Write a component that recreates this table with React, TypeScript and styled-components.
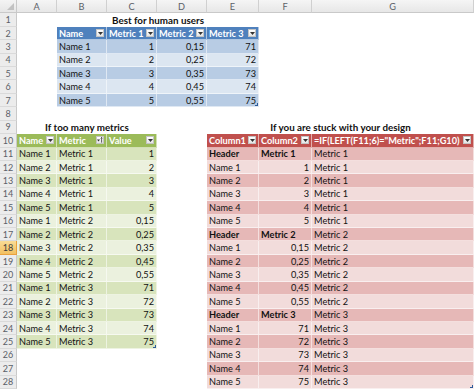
import React from "react";
import styled, { createGlobalStyle } from "styled-components";

const GlobalStyle = createGlobalStyle`
  html, body { margin: 0; padding: 0; background: #ffffff; }
  body { font-family: Lato, "Liberation Sans", sans-serif; }
  * { box-sizing: border-box; }
`;

type Theme = "blue" | "green" | "red";
type Role = "head" | "band1" | "band2";

const palette: Record<Theme, Record<Role, string>> = {
  blue: { head: "#4f81bd", band1: "#b8cce4", band2: "#dce6f1" },
  green: { head: "#9bbb59", band1: "#d8e4bc", band2: "#ebf1de" },
  red: { head: "#c0504d", band1: "#e6b8b7", band2: "#f2dcdb" },
};

type CellSpec = {
  text?: React.ReactNode;
  span?: number;
  theme?: Theme;
  role?: Role;
  align?: "left" | "right" | "center";
  bold?: boolean;
  title?: boolean;
  drop?: "filter" | "sort";
  handle?: boolean;
};

const Sheet = styled.div`
  display: grid;
  grid-template-columns: 17px 40px 50px 50px 50px 52px 53px 162px;
  grid-template-rows: repeat(29, 1fr);
  width: 474px;
  height: 389px;
  overflow: hidden;
  font-family: Lato, "Liberation Sans", sans-serif;
  font-size: 9.2px;
  color: #000;
`;

const Corner = styled.div`
  background: linear-gradient(#f4f4f4, #e6e6e6);
  border-right: 1px solid #c9c9c9;
  border-bottom: 1px solid #c9c9c9;
  display: flex;
  align-items: flex-end;
  justify-content: flex-end;
  padding: 0 2px 2px 0;
`;

const ColHeader = styled.div`
  display: flex;
  align-items: center;
  justify-content: center;
  background: linear-gradient(#f5f5f5, #e7e7e7);
  border-right: 1px solid #d0d0d0;
  border-bottom: 1px solid #c9c9c9;
  color: #5b6068;
  font-size: 9.2px;
`;

const RowHeader = styled.div<{ $selected?: boolean }>`
  display: flex;
  align-items: center;
  justify-content: center;
  background: ${(p) =>
    p.$selected ? "linear-gradient(#f9dc96, #f2c062)" : "#ececec"};
  border-right: 1px solid ${(p) => (p.$selected ? "#e9a23e" : "#c9c9c9")};
  border-bottom: 1px solid ${(p) => (p.$selected ? "#e9a23e" : "#dadada")};
  color: ${(p) => (p.$selected ? "#3d3d3d" : "#5b6068")};
  font-size: 9px;
`;

const Cell = styled.div<{
  $bg?: string;
  $align?: "left" | "right" | "center";
  $bold?: boolean;
  $light?: boolean;
  $span: number;
}>`
  position: relative;
  grid-column: span ${(p) => p.$span};
  display: flex;
  align-items: center;
  justify-content: ${(p) =>
    p.$align === "right" ? "flex-end" : p.$align === "center" ? "center" : "flex-start"};
  padding: 0 2px 0 2px;
  min-width: 0;
  white-space: nowrap;
  overflow: hidden;
  background: ${(p) => p.$bg ?? "transparent"};
  border-right: 1px solid ${(p) => (p.$bg ? "rgba(255,255,255,0.55)" : "transparent")};
  border-bottom: 1px solid ${(p) => (p.$bg ? "rgba(255,255,255,0.55)" : "transparent")};
  font-weight: ${(p) => (p.$bold ? 700 : 400)};
  color: ${(p) => (p.$light ? "#ffffff" : "#111")};
`;

const CellText = styled.span`
  flex: none;
`;

const Title = styled.div<{ $span: number }>`
  grid-column: span ${(p) => p.$span};
  display: flex;
  align-items: center;
  justify-content: center;
  font-weight: 700;
  font-size: 9.8px;
  color: #111;
  white-space: nowrap;
`;

const DropButton = styled.span`
  flex: none;
  width: 8px;
  height: 8px;
  margin-left: auto;
  margin-right: 0;
  background: linear-gradient(#ffffff, #e6e6e6);
  border: 1px solid #c4c4c4;
  display: flex;
  align-items: center;
  justify-content: center;
`;

const Handle = styled.span`
  position: absolute;
  right: 0;
  bottom: 0;
  width: 3px;
  height: 3px;
  border-right: 1px solid #2d5b9a;
  border-bottom: 1px solid #2d5b9a;
`;

const FilterGlyph = () => (
  <svg width="5" height="3" viewBox="0 0 5 3">
    <path d="M0 0 H5 L2.5 3 Z" fill="#333" />
  </svg>
);

const SortGlyph = () => (
  <svg width="6" height="6" viewBox="0 0 6 6">
    <path d="M0 2.6 H3 L1.5 4.4 Z" fill="#333" />
    <path d="M4.6 0.4 V5.6 M3.7 1.4 L4.6 0.4 L5.5 1.4" stroke="#333" strokeWidth="0.8" fill="none" />
  </svg>
);

const E = (): CellSpec => ({});
const H = (theme: Theme, text: string, drop: "filter" | "sort" = "filter"): CellSpec => ({
  theme,
  role: "head",
  text,
  bold: true,
  drop,
});
const D = (
  theme: Theme,
  role: Role,
  text: React.ReactNode,
  align: "left" | "right" = "left",
  bold = false,
  handle = false
): CellSpec => ({ theme, role, text, align, bold, handle });

const buildRows = (): CellSpec[][] => {
  const rows: CellSpec[][] = [];
  rows.push([E(), { title: true, text: "Best for human users", span: 4 }, E(), E()]);
  rows.push([E(), H("blue", "Name"), H("blue", "Metric 1"), H("blue", "Metric 2"), H("blue", "Metric 3"), E(), E()]);
  for (let i = 1; i <= 5; i++) {
    const band: Role = i % 2 === 1 ? "band1" : "band2";
    rows.push([
      E(),
      D("blue", band, `Name ${i}`),
      D("blue", band, `${i}`, "right"),
      D("blue", band, `0,${i}5`, "right"),
      D("blue", band, `${70 + i}`, "right", false, i === 5),
      E(),
      E(),
    ]);
  }
  rows.push([E(), E(), E(), E(), E(), E(), E()]);
  rows.push([
    { title: true, text: "If too many metrics", span: 3 },
    E(),
    { title: true, text: "If you are stuck with your design", span: 3 },
  ]);
  rows.push([
    H("green", "Name"),
    H("green", "Metric", "sort"),
    H("green", "Value"),
    E(),
    H("red", "Column1"),
    H("red", "Column2"),
    H("red", '=IF(LEFT(F11;6)="Metric";F11;G10)'),
  ]);
  const val = (m: number, n: number) => (m === 1 ? `${n}` : m === 2 ? `0,${n}5` : `${70 + n}`);
  for (let k = 0; k < 18; k++) {
    const band: Role = k % 2 === 0 ? "band1" : "band2";
    const row: CellSpec[] = [];
    if (k < 15) {
      const m = Math.floor(k / 5) + 1;
      const n = (k % 5) + 1;
      row.push(
        D("green", band, `Name ${n}`),
        D("green", band, `Metric ${m}`),
        D("green", band, val(m, n), "right", false, k === 14)
      );
    } else {
      row.push(E(), E(), E());
    }
    row.push(E());
    const g = Math.floor(k / 6) + 1;
    const j = k % 6;
    if (j === 0) {
      row.push(
        D("red", band, "Header", "left", true),
        D("red", band, `Metric ${g}`, "left", true),
        D("red", band, `Metric ${g}`)
      );
    } else {
      row.push(
        D("red", band, `Name ${j}`),
        D("red", band, val(g, j), "right"),
        D("red", band, `Metric ${g}`, "left", false, k === 17)
      );
    }
    rows.push(row);
  }
  return rows;
};

const rows = buildRows();
const letters = ["A", "B", "C", "D", "E", "F", "G"];

const SheetCell = ({ spec }: { spec: CellSpec }) => {
  if (spec.title) {
    return <Title $span={spec.span ?? 1}>{spec.text}</Title>;
  }
  const bg = spec.theme && spec.role ? palette[spec.theme][spec.role] : undefined;
  const isHead = spec.role === "head";
  return (
    <Cell
      $span={spec.span ?? 1}
      $bg={bg}
      $align={spec.align}
      $bold={spec.bold}
      $light={isHead}
    >
      {spec.text !== undefined && <CellText>{spec.text}</CellText>}
      {spec.drop && (
        <DropButton>{spec.drop === "sort" ? <SortGlyph /> : <FilterGlyph />}</DropButton>
      )}
      {spec.handle && <Handle />}
    </Cell>
  );
};

export default function App() {
  return (
    <>
      <GlobalStyle />
      <Sheet>
        <Corner>
          <svg width="7" height="7" viewBox="0 0 7 7">
            <path d="M7 0 V7 H0 Z" fill="#c2c2c2" />
          </svg>
        </Corner>
        {letters.map((l) => (
          <ColHeader key={l}>{l}</ColHeader>
        ))}
        {rows.map((row, ri) => (
          <React.Fragment key={ri}>
            <RowHeader $selected={ri + 1 === 18}>{ri + 1}</RowHeader>
            {row.map((spec, ci) => (
              <SheetCell key={ci} spec={spec} />
            ))}
          </React.Fragment>
        ))}
      </Sheet>
    </>
  );
}
